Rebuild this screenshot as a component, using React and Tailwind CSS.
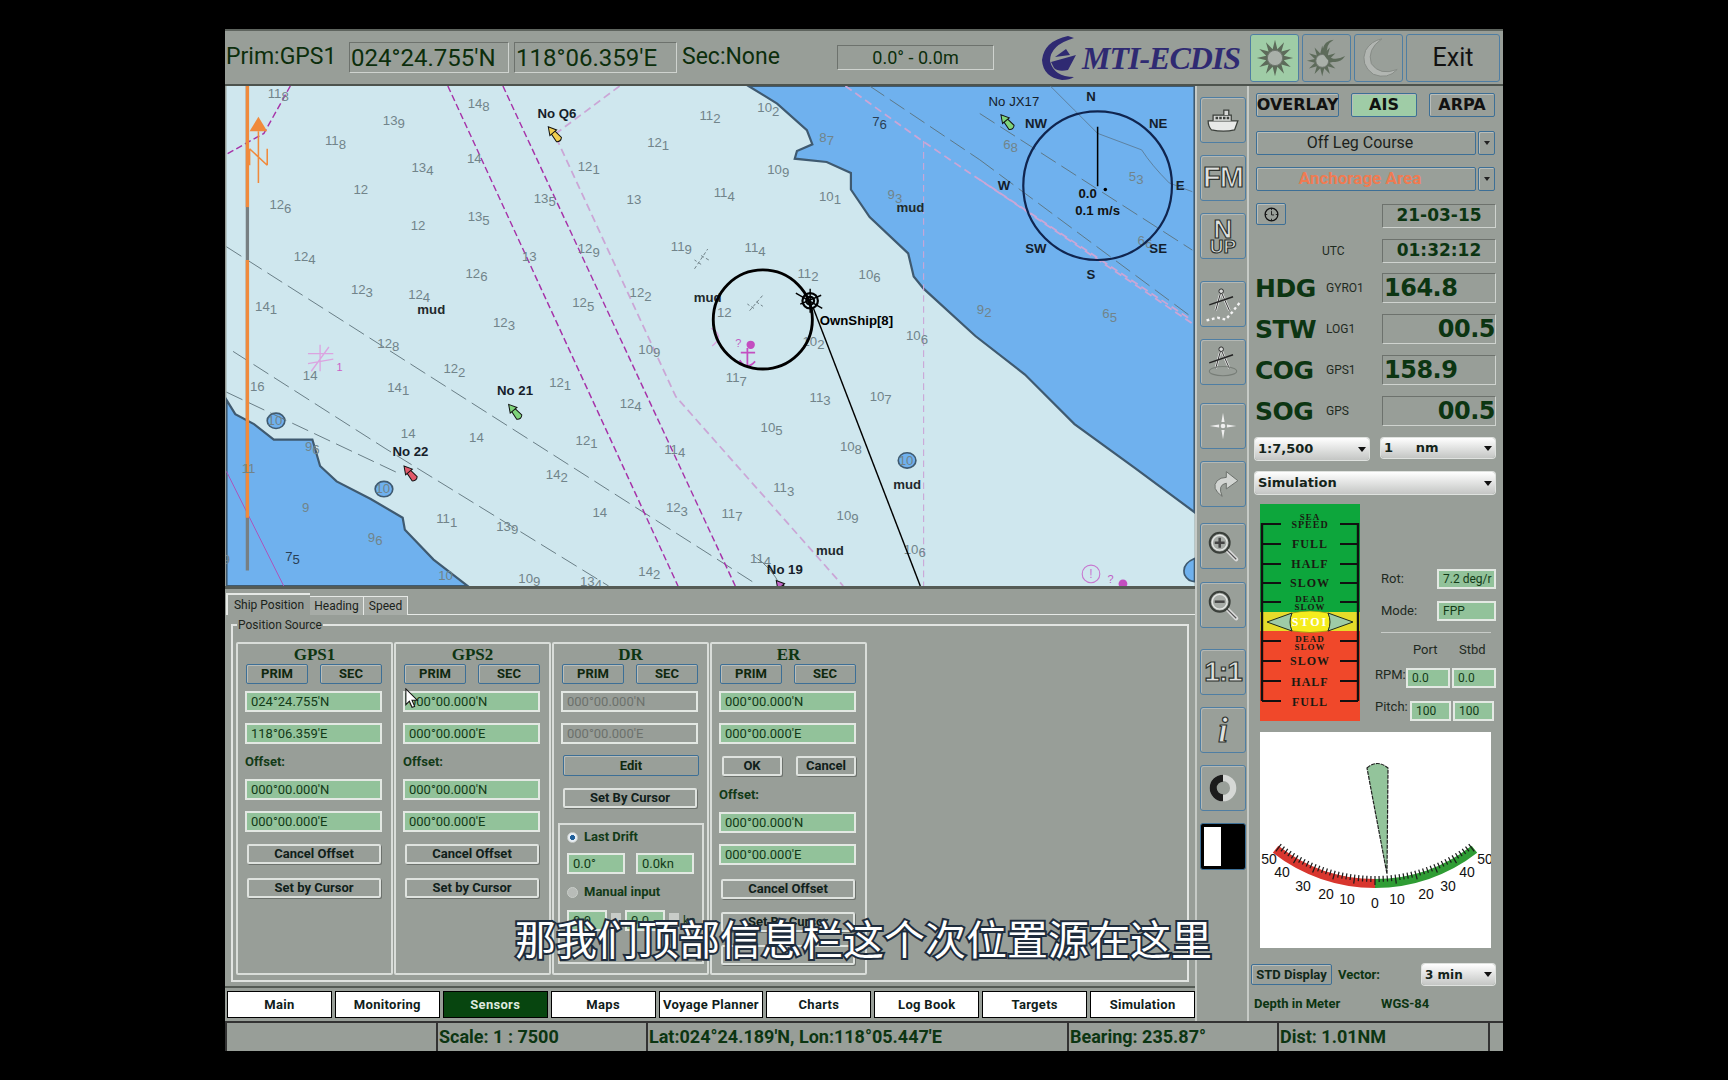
import React from 'react';

const soundings = [
  [252,85,'11','8'],[357,109,'13','9'],[434,94,'14','8'],[644,105,'11','2'],[697,98,'10','2'],[750,125,'8','7'],
  [304,128,'11','8'],[597,129,'12','1'],[534,151,'12','1'],[383,152,'13','4'],[706,154,'10','9'],[327,172,'12',''],
  [494,180,'13','5'],[575,181,'13',''],[657,175,'11','4'],[753,178,'10','1'],[812,177,'9','3'],[254,186,'12','6'],
  [379,205,'12',''],[434,197,'13','5'],[276,233,'12','4'],[534,226,'12','9'],[618,224,'11','9'],[685,225,'11','4'],
  [432,248,'12','6'],[733,248,'11','2'],[789,249,'10','6'],[480,233,'13',''],[581,266,'12','2'],[328,263,'12','3'],
  [380,267,'12','4'],[529,275,'12','5'],[241,278,'14','1'],[657,284,'12',''],[430,144,'14',''],[457,293,'12','3'],
  [352,312,'12','8'],[412,335,'12','2'],[361,352,'14','1'],[508,347,'12','1'],[589,317,'10','9'],[738,310,'10','2'],
  [832,305,'10','6'],[668,343,'11','7'],[572,366,'12','4'],[744,361,'11','3'],[799,360,'10','7'],[233,351,'16',''],
  [281,341,'14',''],[370,394,'14',''],[432,397,'14',''],[700,388,'10','5'],[772,405,'10','8'],[532,400,'12','1'],
  [612,408,'11','4'],[505,431,'14','2'],[711,443,'11','3'],[544,465,'14',''],[614,461,'12','3'],[664,466,'11','7'],
  [769,468,'10','9'],[405,471,'11','1'],[460,478,'13','9'],[690,507,'11','4'],[830,499,'10','6'],[589,519,'14','2'],
  [480,525,'10','9'],[536,528,'13','4'],[277,461,'9',''],[340,488,'9','6'],[283,405,'9','6'],[225,425,'11',''],
  [404,523,'10',''],[917,131,'6','8'],[1031,160,'5','3'],[1039,218,'6','6'],[1007,285,'6','5'],[893,281,'9','2'],
  [249,382,'10',''],[347,444,'10',''],[822,418,'10',''],[205,508,'9',''],
];
const darkSoundings = [[798,110,'7','6'],[265,505,'7','5']];
const muds = [[826,188],[391,281],[642,270],[823,440],[753,500]];
const vessels = [
  ['No Q6',505,103,503,122,'#f2cf4f'],
  ['No 21',467,355,467,374,'#7ed37a'],
  ['No 22',372,410,372,430,'#e2596a'],
  ['No JX17',920,92,914,111,'#7ed37a'],
  ['No 19',712,517,710,534,'#c266c9'],
];
const roses = [['N',990,88],['NW',940,112],['NE',1051,112],['W',911,168],['E',1071,168],['SW',940,226],['SE',1051,226],['S',990,249]];

function Sounding({ s, color = '#71848a' }) {
  return (
    <text x={s[0]} y={s[1] + 4} textAnchor="middle" fontSize="12" fill={color}>
      {s[2]}
      {s[3] && <tspan dy="3" fontSize="12">{s[3]}</tspan>}
    </text>
  );
}

function ChartMap() {
  return (
    <svg viewBox="205 78 879 454" className="block w-[969px] h-[500px] ml-[1px]" fontFamily="'Liberation Sans',sans-serif">
      <rect x="205" y="78" width="879" height="454" fill="#cfe7ee" />
      <path d="M679 78 L705 94 L732 118 L737 131 L723 137 L721 144 L750 147 L772 157 L772 172 L789 197 L824 230 L829 251 L838 262 L885 305 L930 340 L975 385 L1030 425 L1084 465 L1084 78 Z" fill="#6fb1ee" stroke="#3f5a70" strokeWidth="2" />
      <path d="M205 363 L213 376 L230 385 L248 399 L283 399 L290 423 L305 437 L336 453 L365 470 L367 481 L393 508 L424 532 L205 532 Z" fill="#6fb1ee" stroke="#3f5a70" strokeWidth="2" />
      <path d="M1084 507 Q1072 512 1075 522 Q1078 528 1084 528 Z" fill="#6fb1ee" stroke="#3f5a70" strokeWidth="1.5" />
      {[[249,382],[347,444],[822,418]].map(([x, y]) => (
        <ellipse key={x} cx={x + 1} cy={y} rx="8" ry="7" fill="#6fb1ee" stroke="#3f5a70" strokeWidth="1.5" />
      ))}

      <g fill="none" stroke="#5b6f78" strokeWidth="0.8" strokeDasharray="16 6">
        <path d="M205 224 L684 529" />
        <path d="M211 319 L349 407 L552 532" />
        <path d="M205 356 L362 430" />
        <path d="M789 78 L889 145" />
        <path d="M889 103 L1082 227" />
        <path d="M889 145 L1079 286" />
      </g>
      <path d="M953 78 Q975 100 996 121 L1036 136 Q1045 150 1061 166 L1082 174" fill="none" stroke="#5b7b95" strokeWidth="0.8" />
      <path d="M684 505 Q700 515 708 532" fill="none" stroke="#5b6f78" strokeWidth="0.8" />

      <g fill="none" stroke="#a632a8" strokeWidth="1.3" strokeDasharray="6 3">
        <path d="M406 78 L615 532" />
        <path d="M456 78 L667 532" />
        <path d="M263 78 L239 121 L205 140" />
      </g>
      <path d="M205 428 L257 532" fill="none" stroke="#b34ab5" strokeWidth="0.8" />
      <g fill="none" stroke="#cba6d6" strokeWidth="1.6" strokeDasharray="7 4">
        <path d="M562 78 L503 122 L613 360 L765 532" />
        <path d="M767 78 L837 128 L1084 295" />
        <path d="M889 163 L1079 289" />
      </g>
      <path d="M838 128 L838 532" fill="none" stroke="#cba6d6" strokeWidth="1" strokeDasharray="6 4" />

      <line x1="224" y1="78" x2="224" y2="518" stroke="#777f82" strokeWidth="3" />
      <line x1="224" y1="78" x2="224" y2="188" stroke="#f08a3c" strokeWidth="3" />
      <line x1="224" y1="236" x2="224" y2="470" stroke="#f08a3c" strokeWidth="3" />
      <path d="M234 106 L242 119 L226 119 Z" fill="#f08a3c" />
      <path d="M234 119 L234 166 M226 135 L226 150 M242 135 L242 150 M226 135 L242 150" fill="none" stroke="#f08a3c" strokeWidth="1.4" />

      {soundings.map((s, i) => <Sounding key={i} s={s} />)}
      {darkSoundings.map((s, i) => <Sounding key={i} s={s} color="#2a3f55" />)}
      {muds.map(([x, y]) => (
        <text key={x} x={x} y={y + 4} textAnchor="middle" fontSize="12" fontWeight="700" fill="#1f2a2c">mud</text>
      ))}

      <g fill="none" stroke="#dba4e0" strokeWidth="1.2">
        <path d="M282 337 L298 315 M290 313 L290 337 M279 321 L302 321 M279 330 L302 326" />
        <path d="M645 298 Q658 305 646 314" />
      </g>
      <g fill="none" stroke="#6f8187" strokeWidth="0.9" strokeDasharray="3 2">
        <path d="M630 244 L642 226 M636 232 L643 236 M636 240 L630 236" />
        <path d="M680 282 L692 268 M686 274 L692 278 M684 280 L678 276" />
      </g>
      <text x="305" y="337" fontSize="10" fill="#cc5fc9">1</text>
      <text x="667" y="315" fontSize="10" fill="#c05fc5">?</text>
      <g fill="none" stroke="#c34ec0" strokeWidth="1.6">
        <circle cx="681" cy="313" r="3" fill="#c34ec0" />
        <path d="M678 316 L678 333 M672 320 L685 320 M671 327 Q677 337 685 328" />
      </g>
      <circle cx="990" cy="521" r="8" fill="none" stroke="#c777cf" strokeWidth="1" />
      <text x="990" y="525" textAnchor="middle" fontSize="11" fill="#c777cf">!</text>
      <text x="1005" y="529" fontSize="10" fill="#c05fc5">?</text>
      <circle cx="1019" cy="530" r="4" fill="#c34ec0" />

      {vessels.map(([name, tx, ty, ix, iy, col]) => (
        <g key={name}>
          <text x={tx} y={ty + 4} textAnchor="middle" fontSize="12" fill="#15202a" fontWeight={name === 'No JX17' ? 400 : 700}>{name}</text>
          <g transform={`translate(${ix} ${iy}) rotate(-40)`}>
            <path d="M-2 -3 L2 -3 L3 6 Q0 9 -3 6 Z" fill={col} stroke="#111" strokeWidth="0.9" />
            <path d="M-4 -2 L0 -9 L4 -2 Z" fill={col} stroke="#111" strokeWidth="0.9" />
          </g>
        </g>
      ))}

      <circle cx="692" cy="290" r="45" fill="none" stroke="#000" strokeWidth="2.6" />
      <line x1="738" y1="280" x2="835" y2="532" stroke="#000" strokeWidth="1.3" />
      <g stroke="#000" fill="none">
        <circle cx="735" cy="273" r="7" strokeWidth="2" />
        <circle cx="735" cy="273" r="3.5" strokeWidth="2" />
        <path d="M735 262 L735 284 M722 266 L746 280 M726 276 L745 268" strokeWidth="1.3" />
      </g>
      <text x="777" y="295" textAnchor="middle" fontSize="12" fontWeight="700" fill="#000">OwnShip[8]</text>

      <circle cx="996" cy="168.5" r="67.5" fill="none" stroke="#10254f" strokeWidth="2" />
      <line x1="996" y1="115" x2="996" y2="169" stroke="#000" strokeWidth="1.4" />
      <circle cx="1003" cy="172" r="1.6" fill="#000" />
      <text x="987" y="180" textAnchor="middle" fontSize="12" fontWeight="700" fill="#111">0.0</text>
      <text x="996" y="195" textAnchor="middle" fontSize="12" fontWeight="700" fill="#111">0.1 m/s</text>
      {roses.map(([t, x, y]) => (
        <text key={t} x={x} y={y + 4} textAnchor="middle" fontSize="12" fontWeight="700" fill="#14202c">{t}</text>
      ))}
    </svg>
  );
}

function Field({ children, w = 'w-[137px]', className = '', off }) {
  return (
    <div className={`${w} h-[21px] flex items-center pl-[4px] border-2 border-[#e3e8e3] text-[13px] leading-none whitespace-nowrap overflow-hidden ${off ? 'bg-[#989e98] text-[#6c716c] border-[#d0d4d0]' : 'bg-[#92c29a] text-[#123a17]'} ${className}`}>
      {children}
    </div>
  );
}

function BlueBtn({ children, className = '' }) {
  return (
    <div className={`h-[20px] flex items-center justify-center rounded-[2px] border border-[#3d6f96] bg-[#999f99] shadow-[inset_1px_1px_0_#b9bdb9] text-[13px] font-bold text-[#10280f] ${className}`}>
      {children}
    </div>
  );
}

function GreyBtn({ children, className = '' }) {
  return (
    <div className={`h-[20px] flex items-center justify-center rounded-[2px] border-2 border-[#dfe3df] bg-[#989e98] shadow-[1px_1px_0_#6d726d] text-[13px] font-bold text-[#10201a] ${className}`}>
      {children}
    </div>
  );
}

function Column({ title, children }) {
  return (
    <div className="w-[157px] h-[333px] shrink-0 border-2 border-[#d9ddd9] rounded-[2px] overflow-hidden relative">
      <div className="h-[19px] pt-[1px] text-center text-[17px] leading-[20px] font-bold text-[#0e3512] font-['Liberation_Serif',serif]">{title}</div>
      <div className="flex gap-[12px] pl-[8px] mt-[1px]">
        <BlueBtn className="w-[62px]">PRIM</BlueBtn>
        <BlueBtn className="w-[62px]">SEC</BlueBtn>
      </div>
      <div className="pl-[7px]">{children}</div>
    </div>
  );
}

function GpsBody({ lat, lon, latOff, lonOff }) {
  return (
    <>
      <Field className="mt-[7px]">{lat}</Field>
      <Field className="mt-[11px]">{lon}</Field>
      <div className="mt-[10px] text-[13px] font-bold leading-[16px] text-[#123a17]">Offset:</div>
      <Field className="mt-[9px]">{latOff}</Field>
      <Field className="mt-[11px]">{lonOff}</Field>
      <GreyBtn className="mt-[12px] ml-[2px] w-[134px]">Cancel Offset</GreyBtn>
      <GreyBtn className="mt-[14px] ml-[2px] w-[134px]">Set by Cursor</GreyBtn>
    </>
  );
}

function Radio({ on }) {
  return (
    <span className={`inline-block w-[11px] h-[11px] rounded-full border border-[#c9cec9] ${on ? 'bg-[radial-gradient(circle,#1f5f9a_35%,#e8eef4_40%)]' : 'bg-[#b8bcb8]'}`} />
  );
}

function SensorPanel() {
  return (
    <div className="h-[400px] bg-[#989e98] border-t-[3px] border-[#555b55] relative">
      <div className="flex items-end h-[26px] pl-[1px] text-[12px] text-[#1a221a]">
        <div className="w-[84px] h-[22px] flex items-center justify-center border-t-2 border-l-2 border-[#e6e9e6]">Ship Position</div>
        <div className="w-[54px] h-[19px] flex items-center justify-center border-t border-r border-[#e6e9e6] bg-[#a7aca7]">Heading</div>
        <div className="w-[44px] h-[19px] flex items-center justify-center border-t border-r border-[#e6e9e6] bg-[#a7aca7]">Speed</div>
        <div className="flex-1 border-b border-[#e6e9e6]" />
      </div>
      <div className="ml-[6px] mt-[9px] w-[958px] h-[358px] border-2 border-[#e2e5e2] pl-[3px] pt-[16px]">
        <div className="absolute left-[12px] top-[28px] h-[16px] px-[1px] bg-[#989e98] text-[12px] leading-[16px] text-[#1d251d]">Position Source</div>
        <div className="flex gap-[1px]">
          <Column title="GPS1">
            <GpsBody lat="024°24.755′N" lon="118°06.359′E" latOff="000°00.000′N" lonOff="000°00.000′E" />
          </Column>
          <Column title="GPS2">
            <GpsBody lat="000°00.000′N" lon="000°00.000′E" latOff="000°00.000′N" lonOff="000°00.000′E" />
          </Column>
          <Column title="DR">
            <Field off className="mt-[7px]">000°00.000′N</Field>
            <Field off className="mt-[11px]">000°00.000′E</Field>
            <BlueBtn className="mt-[11px] w-[136px] h-[21px] ml-[2px]">Edit</BlueBtn>
            <GreyBtn className="mt-[12px] ml-[2px] w-[134px]">Set By Cursor</GreyBtn>
            <div className="-ml-[3px] mt-[15px] w-[146px] h-[141px] border-2 border-[#d9ddd9] pl-[7px]">
              <div className="flex items-center gap-[6px] h-[24px] text-[13px] font-bold text-[#123a17]"><Radio on />Last Drift</div>
              <div className="flex gap-[11px] mt-[4px]">
                <Field w="w-[58px]">0.0°</Field>
                <Field w="w-[58px]">0.0kn</Field>
              </div>
              <div className="flex items-center gap-[6px] h-[24px] mt-[6px] text-[13px] font-bold text-[#123a17]"><Radio />Manual input</div>
              <div className="flex gap-[4px] mt-[6px] items-center text-[12px] text-[#123a17]">
                <Field w="w-[40px]">0.0</Field>
                <span className="w-[10px] h-[16px] bg-[#c8ccc8]" />
                <Field w="w-[40px]">0.0</Field>
                <span className="w-[10px] h-[16px] bg-[#c8ccc8]" />
                <span>kn</span>
              </div>
            </div>
          </Column>
          <Column title="ER">
            <Field className="mt-[7px]">000°00.000′N</Field>
            <Field className="mt-[11px]">000°00.000′E</Field>
            <div className="flex gap-[14px] ml-[3px] mt-[12px]">
              <GreyBtn className="w-[60px]">OK</GreyBtn>
              <GreyBtn className="w-[60px]">Cancel</GreyBtn>
            </div>
            <div className="mt-[11px] text-[13px] font-bold leading-[16px] text-[#123a17]">Offset:</div>
            <Field className="mt-[9px]">000°00.000′N</Field>
            <Field className="mt-[11px]">000°00.000′E</Field>
            <GreyBtn className="mt-[14px] ml-[2px] w-[134px]">Cancel Offset</GreyBtn>
            <GreyBtn className="mt-[13px] ml-[2px] w-[134px]">Set By Cursor</GreyBtn>
            <GreyBtn className="mt-[13px] ml-[2px] w-[134px]" />
          </Column>
        </div>
      </div>
    </div>
  );
}

function BottomTabs() {
  const tabs = ['Main', 'Monitoring', 'Sensors', 'Maps', 'Voyage Planner', 'Charts', 'Log Book', 'Targets', 'Simulation'];
  return (
    <div className="flex gap-[3px] pl-[2px] pt-[3px] pb-[3px] h-[33px] border-t-2 border-[#555b55]">
      {tabs.map((t) => (
        <div key={t} className={`w-[105px] h-[27px] flex items-center justify-center border border-black text-[13px] font-bold tracking-[0.3px] whitespace-nowrap ${t === 'Sensors' ? 'bg-[#07450f] text-[#dfe9df]' : 'bg-white text-[#10201a]'}`}>
          {t}
        </div>
      ))}
    </div>
  );
}

function ToolBtn({ children, className = '' }) {
  return (
    <div className={`w-[46px] h-[46px] flex items-center justify-center rounded-[3px] border border-[#4f7ea3] bg-[#999f99] shadow-[inset_1px_1px_0_#b4b8b4] ${className}`}>
      {children}
    </div>
  );
}

const outlined = "text-white/70 font-bold font-['Liberation_Sans',sans-serif] [-webkit-text-stroke:1.2px_#2f342f]";

function Caliper({ base }) {
  return (
    <svg viewBox="0 0 46 46" className="w-[42px] h-[42px]">
      <circle cx="21" cy="9" r="2.5" fill="#d8dad8" stroke="#222" />
      <path d="M20 12 L15 30 M22 12 L30 30" stroke="#f0f0f0" strokeWidth="2.6" />
      <path d="M20 12 L15 30 M22 12 L30 30" stroke="#222" strokeWidth="1" />
      <path d="M8 24 L34 15" stroke="#222" strokeWidth="1.6" />
      {base === 'dots' ? (
        <path d="M5 41 L17 38 L26 40 L33 32 L41 22" fill="none" stroke="#f4f4f4" strokeWidth="2.6" strokeDasharray="3 3" />
      ) : (
        <ellipse cx="23" cy="33" rx="15" ry="5" fill="none" stroke="#777d77" strokeWidth="1.2" />
      )}
    </svg>
  );
}

function Magnifier({ plus }) {
  return (
    <svg viewBox="0 0 46 46" className="w-[38px] h-[38px]">
      <path d="M27 27 L39 39" stroke="#ddd" strokeWidth="5" strokeLinecap="round" />
      <path d="M27 27 L39 39" stroke="#555" strokeWidth="1.4" />
      <circle cx="19" cy="19" r="12" fill="#a7aca7" stroke="#3a3f3a" strokeWidth="2.5" />
      <circle cx="19" cy="19" r="9" fill="none" stroke="#e5e7e5" strokeWidth="1.5" />
      <path d={plus ? 'M13 19 H25 M19 13 V25' : 'M13 19 H25'} stroke="#444" strokeWidth="3" />
    </svg>
  );
}

function ToolBar() {
  return (
    <div className="w-[54px] shrink-0 pl-[3px] border-l-2 border-r-2 border-[#c6cac6] bg-[#989e98] flex flex-col pt-[11px]">
      <ToolBtn>
        <svg viewBox="0 0 46 46" className="w-[38px] h-[38px]">
          <path d="M5 24 L41 24 L37 35 Q24 38 9 35 Q5 31 5 24 Z" fill="#e8e9e8" stroke="#3a3f3a" strokeWidth="1.5" />
          <path d="M11 24 V17 H33 V24" fill="#d6d8d6" stroke="#3a3f3a" strokeWidth="1.5" />
          <path d="M24 17 V11 H30 V17" fill="#d6d8d6" stroke="#3a3f3a" strokeWidth="1.5" />
          <path d="M14 20.5 H31" stroke="#3a3f3a" strokeWidth="3" strokeDasharray="3 1.5" />
        </svg>
      </ToolBtn>
      <ToolBtn className="mt-[12px]"><span className={`${outlined} text-[29px] tracking-[-1px]`}>FM</span></ToolBtn>
      <ToolBtn className="mt-[12px] flex-col">
        <span className={`${outlined} text-[26px] leading-[20px]`}>N</span>
        <span className={`${outlined} text-[19px] leading-[15px]`}>UP</span>
      </ToolBtn>
      <ToolBtn className="mt-[22px]"><Caliper base="dots" /></ToolBtn>
      <ToolBtn className="mt-[12px]"><Caliper /></ToolBtn>
      <ToolBtn className="mt-[18px]">
        <svg viewBox="0 0 46 46" className="w-[36px] h-[36px]">
          <path d="M23 6 L25 18 L21 18 Z M23 40 L25 28 L21 28 Z M6 23 L18 21 L18 25 Z M40 23 L28 21 L28 25 Z" fill="#eeeeee" />
          <circle cx="23" cy="23" r="3" fill="#eeeeee" />
        </svg>
      </ToolBtn>
      <ToolBtn className="mt-[12px]">
        <svg viewBox="0 0 46 46" className="w-[38px] h-[38px]">
          <path d="M22 38 Q8 28 16 19 Q20 15 27 15 L27 8 L41 19 L27 29 L27 22 Q16 24 22 38 Z" fill="#d2d5d2" stroke="#6b706b" strokeWidth="1.2" />
        </svg>
      </ToolBtn>
      <ToolBtn className="mt-[16px]"><Magnifier plus /></ToolBtn>
      <ToolBtn className="mt-[13px]"><Magnifier /></ToolBtn>
      <ToolBtn className="mt-[21px]"><span className={`${outlined} text-[28px] tracking-[-1px]`}>1:1</span></ToolBtn>
      <ToolBtn className="mt-[12px]"><span className="text-[36px] italic font-bold font-['Liberation_Serif',serif] text-white/70 [-webkit-text-stroke:1.2px_#2f342f]">i</span></ToolBtn>
      <ToolBtn className="mt-[12px]">
        <svg viewBox="0 0 46 46" className="w-[36px] h-[36px]">
          <circle cx="23" cy="23" r="13" fill="none" stroke="#d6d8d6" strokeWidth="8" />
          <path d="M23 6 A17 17 0 0 0 23 40 L23 31 A8 8 0 0 1 23 15 Z" fill="#1c1c1c" />
        </svg>
      </ToolBtn>
      <div className="mt-[12px] w-[46px] h-[47px] flex rounded-[3px] border border-[#3d6f96] bg-black p-[3px]">
        <span className="w-[17px] bg-white" />
      </div>
    </div>
  );
}

function Telegraph() {
  const ticks = [20, 40, 60, 79, 98, 137, 157, 177, 197];
  const labels = [
    ['SEA', 16, 9], ['SPEED', 24, 10], ['FULL', 44, 12], ['HALF', 64, 12], ['SLOW', 83, 12],
    ['DEAD', 98, 9], ['SLOW', 106, 9], ['DEAD', 138, 9], ['SLOW', 146, 9], ['SLOW', 161, 12], ['HALF', 182, 12], ['FULL', 202, 12],
  ];
  return (
    <svg viewBox="0 0 100 217" className="w-[100px] h-[217px] shrink-0" fontFamily="'Liberation Serif',serif">
      <rect width="100" height="108" fill="#0da63c" />
      <rect y="108" width="100" height="19" fill="#e6dc2a" />
      <rect y="127" width="100" height="90" fill="#f0482a" />
      <path d="M2 19 V197 M98 19 V197" stroke="#111" strokeWidth="2.4" />
      {ticks.map((y) => (
        <path key={y} d={`M2 ${y} H21 M80 ${y} H98`} stroke="#111" strokeWidth="2" />
      ))}
      {labels.map(([t, y, s], i) => (
        <text key={i} x="50" y={y} textAnchor="middle" fontSize={s} letterSpacing="1" fontWeight="700" fill="#1a1a12">{t}</text>
      ))}
      <path d="M32 109 Q50 105 68 109 Q72 118 68 127 Q50 130 32 127 Q28 118 32 109 Z" fill="#f5ec1d" stroke="#7a7a10" strokeWidth="0.6" />
      <text x="50" y="122" textAnchor="middle" fontSize="12" letterSpacing="2" fontWeight="700" fill="#fff">STOI</text>
      <path d="M7 118 L32 109 Q28 118 32 127 Z M93 118 L68 109 Q72 118 68 127 Z" fill="#9ecba6" stroke="#1d2b1d" strokeWidth="1" />
    </svg>
  );
}

function Gauge() {
  const cx = 115, cy = -10;
  const pt = (r, deg) => {
    const a = (deg * Math.PI) / 180;
    return [cx + r * Math.sin(a), cy + r * Math.cos(a)];
  };
  const ticks = [];
  for (let d = -37.5; d <= 37.5; d += 1.5) ticks.push(d);
  const band = (sign) => {
    const [x1, y1] = pt(166, sign * 38);
    const [x2, y2] = pt(157, sign * 38);
    return `M${x1} ${y1} A166 166 0 0 ${sign < 0 ? 0 : 1} ${cx} ${cy + 166} L${cx} ${cy + 157} A157 157 0 0 ${sign < 0 ? 1 : 0} ${x2} ${y2} Z`;
  };
  const nums = [['50',9,132],['40',22,145],['30',43,159],['20',66,167],['10',87,172],['0',115,176],['10',137,172],['20',166,167],['30',188,159],['40',207,145],['50',225,132]];
  return (
    <svg viewBox="0 0 231 216" className="w-[231px] h-[216px] mt-[11px] bg-white" fontFamily="'Liberation Sans',sans-serif">
      <path d={band(-1)} fill="#d8362e" />
      <path d={band(1)} fill="#2f9c34" />
      {ticks.map((d, i) => {
        const [a, b] = pt(154, d);
        const [c, e] = pt(i % 5 === 0 ? 163 : 160, d);
        return <line key={d} x1={a} y1={b} x2={c} y2={e} stroke="#1a1a1a" strokeWidth="1.2" />;
      })}
      {nums.map(([t, x, y], i) => (
        <text key={i} x={x} y={y} textAnchor="middle" fontSize="14" fill="#111">{t}</text>
      ))}
      <path d="M107 36 Q117 27 128 36 L127 142 Z" fill="#93c49b" stroke="#222" strokeWidth="1.2" strokeDasharray="4 1" />
    </svg>
  );
}

function Dropdown({ children, className = '' }) {
  return (
    <div className={`h-[22px] flex items-center justify-between px-[3px] rounded-[3px] bg-gradient-to-b from-white to-[#c4c6c4] shadow-[0_0_0_1px_#dfe2df] text-[13px] font-bold text-[#14241a] font-['DejaVu_Sans',sans-serif] ${className}`}>
      <span className="whitespace-pre">{children}</span>
      <span className="w-0 h-0 border-l-[4px] border-r-[4px] border-t-[5px] border-l-transparent border-r-transparent border-t-[#111]" />
    </div>
  );
}

function DataRow({ label, src, value, right, className = '' }) {
  return (
    <div className={`flex items-center h-[30px] ${className}`}>
      <div className="w-[70px] -ml-[1px] mr-[1px] text-[25px] font-bold leading-none text-[#0c3512] font-['DejaVu_Sans',sans-serif] tracking-[-0.5px]">{label}</div>
      <div className="w-[56px] text-[12px] text-[#1f2a1f]">{src}</div>
      <div className={`w-[114px] h-[30px] flex items-center border-l border-t border-[#6d726d] border-r border-b border-r-[#cfd3cf] border-b-[#cfd3cf] text-[24px] font-bold text-[#0c3512] font-['DejaVu_Sans',sans-serif] tracking-[-0.5px] ${right ? 'justify-end' : 'pl-[1px]'}`}>
        {value}
      </div>
    </div>
  );
}

function SmallField({ children, className = '' }) {
  return (
    <div className={`h-[20px] flex items-center pl-[4px] bg-[#92c29a] border-2 border-[#e3e8e3] text-[12px] leading-none text-[#123a17] whitespace-nowrap overflow-hidden ${className}`}>
      {children}
    </div>
  );
}

function RightPanel() {
  const caret = <span className="w-0 h-0 border-l-[3px] border-r-[3px] border-t-[4px] border-l-transparent border-r-transparent border-t-[#222]" />;
  return (
    <div className="flex-1 bg-[#989e98] pl-[7px] pt-[7px] relative">
      <div className="flex text-[17px] font-bold text-[#111] font-['DejaVu_Sans',sans-serif]">
        <BlueBtn className="!h-[24px] w-[83px] !text-[16px] !text-[#111]">OVERLAY</BlueBtn>
        <BlueBtn className="!h-[24px] w-[66px] ml-[12px] !bg-[#9fcca6] !text-[16px] !text-[#111]">AIS</BlueBtn>
        <BlueBtn className="!h-[24px] w-[66px] ml-[12px] !text-[16px] !text-[#111]">ARPA</BlueBtn>
      </div>
      <div className="flex gap-[2px] mt-[14px]">
        <BlueBtn className="!h-[24px] w-[220px] pr-[12px] !font-normal !text-[16px] !text-[#1c1f1c]">Off Leg Course</BlueBtn>
        <BlueBtn className="!h-[24px] w-[17px]">{caret}</BlueBtn>
      </div>
      <div className="flex gap-[2px] mt-[12px]">
        <BlueBtn className="!h-[24px] w-[220px] pr-[12px] !text-[17px] !text-[#f07b52]">Anchorage Area</BlueBtn>
        <BlueBtn className="!h-[24px] w-[17px]">{caret}</BlueBtn>
      </div>
      <div className="flex mt-[13px] items-start">
        <BlueBtn className="!h-[22px] w-[30px] mt-[-1px]">
          <svg viewBox="0 0 20 20" className="w-[17px] h-[17px]">
            <circle cx="10" cy="10" r="7.5" fill="none" stroke="#111" strokeWidth="1.5" />
            <path d="M10 2.5 V5 M10 15 V17.5 M2.5 10 H5 M15 10 H17.5 M10 6 V10.5 H13" stroke="#111" strokeWidth="1" fill="none" />
          </svg>
        </BlueBtn>
        <div className="ml-[96px] w-[114px] h-[24px] flex items-center justify-center border border-[#6d726d] border-r-[#cfd3cf] border-b-[#cfd3cf] text-[17px] font-bold text-[#0c3512] font-['DejaVu_Sans',sans-serif]">21-03-15</div>
      </div>
      <div className="flex items-center mt-[11px]">
        <div className="w-[126px] pl-[66px] text-[12px] text-[#1f2a1f]">UTC</div>
        <div className="w-[114px] h-[24px] flex items-center justify-center border border-[#6d726d] border-r-[#cfd3cf] border-b-[#cfd3cf] text-[17px] font-bold text-[#0c3512] font-['DejaVu_Sans',sans-serif]">01:32:12</div>
      </div>
      <DataRow label="HDG" src="GYRO1" value="164.8" className="mt-[10px]" />
      <DataRow label="STW" src="LOG1" value="00.5" right className="mt-[11px]" />
      <DataRow label="COG" src="GPS1" value="158.9" className="mt-[11px]" />
      <DataRow label="SOG" src="GPS" value="00.5" right className="mt-[11px]" />
      <div className="flex gap-[12px] mt-[12px] -ml-[1px]">
        <Dropdown className="w-[114px]">1:7,500</Dropdown>
        <Dropdown className="w-[114px] !h-[20px]">{'1     nm'}</Dropdown>
      </div>
      <Dropdown className="w-[240px] mt-[12px] -ml-[1px]">Simulation</Dropdown>
      <div className="flex ml-[4px] mt-[10px]">
        <Telegraph />
        <div className="ml-[21px] w-[115px] text-[13px] text-[#1f2a1f] relative">
          <div className="flex items-center mt-[65px] h-[20px]">
            <span className="w-[56px]">Rot:</span>
            <SmallField className="w-[59px]">7.2 deg/r</SmallField>
          </div>
          <div className="flex items-center mt-[12px] h-[20px]">
            <span className="w-[56px]">Mode:</span>
            <SmallField className="w-[59px]">FPP</SmallField>
          </div>
          <div className="h-px bg-[#c8ccc8] mt-[11px] w-[110px]" />
          <div className="flex mt-[9px] h-[16px] items-center">
            <span className="ml-[32px] w-[46px]">Port</span>
            <span>Stbd</span>
          </div>
          <div className="flex items-center mt-[10px] -ml-[6px] h-[20px]">
            <span className="w-[31px] -mt-[6px]">RPM:</span>
            <SmallField className="w-[44px]">0.0</SmallField>
            <SmallField className="w-[44px] ml-[2px]">0.0</SmallField>
          </div>
          <div className="flex items-center mt-[13px] -ml-[6px] h-[20px]">
            <span className="w-[35px] -mt-[8px]">Pitch:</span>
            <SmallField className="w-[41px]">100</SmallField>
            <SmallField className="w-[41px] ml-[2px]">100</SmallField>
          </div>
        </div>
      </div>
      <div className="ml-[4px]"><Gauge /></div>
      <div className="flex items-center mt-[16px] -ml-[5px]">
        <BlueBtn className="w-[81px] !h-[21px] !text-[#11281a]">STD Display</BlueBtn>
        <span className="ml-[6px] text-[13px] font-bold text-[#0c3512]">Vector:</span>
        <Dropdown className="w-[73px] ml-[42px] !h-[21px] !text-[12px]">3 min</Dropdown>
      </div>
      <div className="flex mt-[9px] -ml-[2px] text-[13px] font-bold text-[#0c3512]">
        <span className="w-[127px]">Depth in Meter</span>
        <span>WGS-84</span>
      </div>
    </div>
  );
}

function ModeBtn({ active, children }) {
  return (
    <div className={`w-[49px] h-[48px] flex items-center justify-center rounded-[3px] border border-[#4f7ea3] ${active ? 'bg-[#9fcca6]' : 'bg-[#999f99]'}`}>
      {children}
    </div>
  );
}

function Sun({ cx = 23, cy = 23, r = 19 }) {
  const pts = [];
  for (let i = 0; i < 24; i++) {
    const rad = i % 2 === 0 ? r : r * 0.5;
    const a = (i * Math.PI) / 12;
    pts.push(`${cx + rad * Math.sin(a)},${cy - rad * Math.cos(a)}`);
  }
  return (
    <>
      <polygon points={pts.join(' ')} fill="#5d6b5a" />
      <circle cx={cx} cy={cy} r={r * 0.42} fill="#a9b0a9" stroke="#6d756d" />
    </>
  );
}

function TopBar() {
  const sunken = 'border border-[#6d726d] border-r-[#cfd3cf] border-b-[#cfd3cf]';
  return (
    <div className="h-[57px] flex items-center bg-[#989e98] border-b-2 border-[#4d534d] border-t-2 border-t-[#5e645e] text-[24px] text-[#0c2e0c] relative">
      <span className="w-[124px] pl-[1px] text-[23px]">Prim:GPS1</span>
      <div className={`w-[160px] h-[31px] flex items-center pl-[1px] ${sunken}`}>024°24.755′N</div>
      <div className={`w-[163px] h-[31px] ml-[5px] flex items-center pl-[1px] ${sunken}`}>118°06.359′E</div>
      <span className="ml-[5px] w-[155px] text-[23px]">Sec:None</span>
      <div className={`w-[157px] h-[25px] flex items-center justify-center text-[18px] ${sunken}`}>0.0° - 0.0m</div>
      <svg viewBox="0 0 40 46" className="w-[40px] h-[46px] ml-[46px]">
        <path d="M28 1 Q4 6 2 25 Q3 42 22 45 Q30 45 34 42 Q14 42 10 26 Q10 10 34 3 Z" fill="#2f2a72" />
        <path d="M11 27 L36 20 L28 35 Q18 37 14 33 Z" fill="#2f2a72" />
        <path d="M15 22 L26 14 L30 20 Z" fill="#2f2a72" />
      </svg>
      <span className="ml-[2px] w-[168px] text-[32px] leading-none font-bold italic text-[#2f2a72] tracking-[-1px] font-['Liberation_Serif',serif] whitespace-nowrap">MTI-ECDIS</span>
      <div className="flex gap-[3px] items-center">
        <ModeBtn active>
          <svg viewBox="0 0 46 46" className="w-[44px] h-[44px]"><Sun /></svg>
        </ModeBtn>
        <ModeBtn>
          <svg viewBox="0 0 46 46" className="w-[44px] h-[44px]">
            <Sun cx={18} cy={26} r={16} />
            <path d="M30 4 Q20 10 24 20 Q30 27 42 21 Q36 30 25 26 Q14 16 22 7 Q26 4 30 4 Z" fill="#5d6b5a" />
          </svg>
        </ModeBtn>
        <ModeBtn>
          <svg viewBox="0 0 46 46" className="w-[44px] h-[44px]">
            <path d="M26 3 Q10 14 15 29 Q24 42 42 35 Q32 46 17 40 Q3 30 9 15 Q15 5 26 3 Z" fill="#b2b6b2" stroke="#858a85" />
          </svg>
        </ModeBtn>
        <div className="w-[94px] h-[48px] flex items-center justify-center rounded-[3px] border border-[#4f7ea3] text-[25px] text-[#111]">Exit</div>
      </div>
    </div>
  );
}

function StatusBar() {
  const cell = "h-full flex items-center border-r-2 border-[#333] text-[18px] font-bold text-[#0c3512] pl-[1px] pb-[2px] whitespace-nowrap";
  return (
    <div className="h-[30px] flex bg-[#989e98] border-t-2 border-[#333] border-l-2 pl-0">
      <div className={`${cell} w-[211px]`} />
      <div className={`${cell} w-[210px]`}>Scale: 1 : 7500</div>
      <div className={`${cell} w-[421px]`}>Lat:024°24.189′N, Lon:118°05.447′E</div>
      <div className={`${cell} w-[210px]`}>Bearing: 235.87°</div>
      <div className={`${cell} w-[211px]`}>Dist: 1.01NM</div>
    </div>
  );
}

export default function App() {
  return (
    <div className="relative w-[1728px] h-[1080px] overflow-hidden bg-black pt-[29px] pl-[225px] font-['Roboto',sans-serif]">
      <div className="w-[1278px] h-[1022px] flex flex-col bg-[#989e98]">
        <TopBar />
        <div className="flex h-[935px]">
          <div className="w-[970px] shrink-0 flex flex-col">
            <div className="h-[500px] shrink-0 overflow-hidden"><ChartMap /></div>
            <SensorPanel />
            <BottomTabs />
          </div>
          <ToolBar />
          <RightPanel />
        </div>
        <StatusBar />
      </div>

      <svg viewBox="0 0 16 24" className="absolute left-[405px] top-[688px] w-[14px] h-[21px]">
        <path d="M1 1 L1 19 L5 15 L8 22 L11 21 L8 14 L14 14 Z" fill="#fff" stroke="#111" strokeWidth="1.2" />
      </svg>

      <div className="absolute left-[515px] top-[910px] text-[41px] leading-[54px] text-white whitespace-nowrap font-['Noto_Sans_CJK_SC',sans-serif] [-webkit-text-stroke:4px_#1e2c3c] [paint-order:stroke_fill]">
        那我们顶部信息栏这个次位置源在这里
      </div>
    </div>
  );
}
